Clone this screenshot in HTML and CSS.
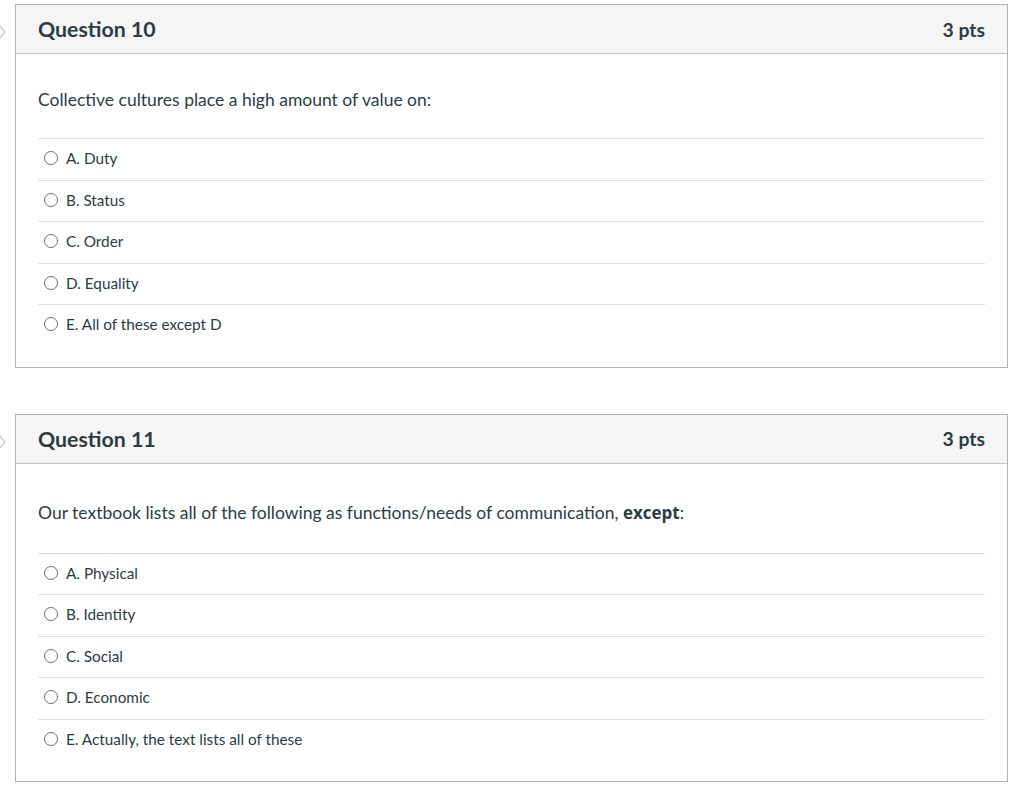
FILE: index.html
```html
<!DOCTYPE html>
<html>
<head>
<meta charset="utf-8">
<link rel="stylesheet" href="styles.css">
</head>
<body>
<div class="page">
  <div class="qrow">
    <div class="marker"><svg width="15" height="20" viewBox="0 0 15 20"><path d="M0 3 L6 10 L0 17" fill="none" stroke="#c4c8cc" stroke-width="1.3"/></svg></div>
    <div class="card">
      <div class="head"><span class="title">Question 10</span><span class="pts">3 pts</span></div>
      <div class="body">
        <div class="qtext">Collective cultures place a high amount of value on:</div>
        <ul class="answers">
          <li><span class="radio"></span>A. Duty</li>
          <li><span class="radio"></span>B. Status</li>
          <li><span class="radio"></span>C. Order</li>
          <li><span class="radio"></span>D. Equality</li>
          <li><span class="radio"></span>E. All of these except D</li>
        </ul>
      </div>
    </div>
  </div>
  <div class="qrow">
    <div class="marker"><svg width="15" height="20" viewBox="0 0 15 20"><path d="M0 3 L6 10 L0 17" fill="none" stroke="#c4c8cc" stroke-width="1.3"/></svg></div>
    <div class="card">
      <div class="head"><span class="title">Question 11</span><span class="pts">3 pts</span></div>
      <div class="body">
        <div class="qtext tall">Our textbook lists all of the following as functions/needs of communication, <strong class="em">except</strong>:</div>
        <ul class="answers">
          <li><span class="radio"></span>A. Physical</li>
          <li><span class="radio"></span>B. Identity</li>
          <li><span class="radio"></span>C. Social</li>
          <li><span class="radio"></span>D. Economic</li>
          <li><span class="radio"></span>E. Actually, the text lists all of these</li>
        </ul>
      </div>
    </div>
  </div>
</div>
</body>
</html>
```

FILE: styles.css
```css
html, body { margin: 0; padding: 0; background: #fff; }
body {
  font-family: Lato, "Open Sans", sans-serif;
  color: #2d3b45;
}
.page {
  padding-top: 4px;
  width: 1008px;
  display: flex;
  flex-direction: column;
  gap: 46px;
}
.qrow {
  display: flex;
  align-items: flex-start;
}
.marker {
  width: 15px;
  flex: none;
  padding-top: 18px;
  margin-left: -1px;
  margin-right: 1px;
}
.marker svg { display: block; }
.card {
  flex: 1;
  border: 1px solid #b3b3b3;
  background: #fff;
}
.head {
  height: 48px;
  background: #f5f5f5;
  border-bottom: 1px solid #c4c4c4;
  display: flex;
  align-items: center;
  justify-content: space-between;
  padding: 0 22px 0 22px;
}
.title {
  font-size: 21.3px;
  font-weight: 700;
}
.pts {
  font-size: 19.4px;
  font-weight: 700;
}
.body {
  padding: 34px 22px 21px 22px;
}
.qtext {
  font-size: 17.5px;
  line-height: 24px;
  margin-bottom: 26px;
}
.qtext.tall {
  line-height: 29px;
  margin-bottom: 26px;
}
.em {
  font-family: "Open Sans", sans-serif;
  font-size: 17px;
  font-weight: 700;
}
.answers {
  list-style: none;
  margin: 0;
  padding: 0;
}
.answers li {
  border-top: 1px solid #dcdfe1;
  height: 40.5px;
  display: flex;
  align-items: center;
  font-size: 15.3px;
  padding-left: 6px;
  padding-bottom: 2px;
  box-sizing: border-box;
  height: 41.5px;
}
.radio {
  width: 12px;
  height: 12px;
  border: 1px solid #6f6f6f;
  border-radius: 50%;
  margin-right: 8px;
  flex: none;
  background: #fff;
}
```
